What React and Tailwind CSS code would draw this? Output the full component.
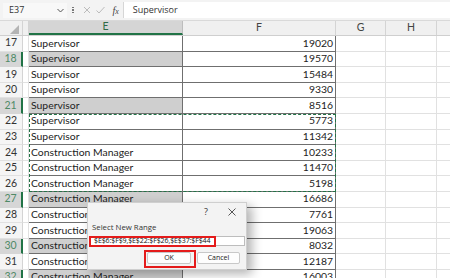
const rows = [
  [17, 'Supervisor', 19020, false],
  [18, 'Supervisor', 19570, true],
  [19, 'Supervisor', 15484, false],
  [20, 'Supervisor', 9330, false],
  [21, 'Supervisor', 8516, true],
  [22, 'Supervisor', 5773, false],
  [23, 'Supervisor', 11342, false],
  [24, 'Construction Manager', 10233, false],
  [25, 'Construction Manager', 11470, false],
  [26, 'Construction Manager', 5198, false],
  [27, 'Construction Manager', 16686, true],
  [28, 'Construction Manager', 7761, false],
  [29, 'Construction Manager', 19063, false],
  [30, 'Construction Manager', 8032, true],
  [31, 'Construction Manager', 12187, false],
  [32, 'Construction Manager', 16003, true],
];

function Row({ n, label, val, sel }) {
  return (
    <div className="flex h-[15.6px] shrink-0">
      <div
        className={
          sel
            ? 'w-[23px] shrink-0 flex items-center justify-center text-[10.5px] bg-[#d6d6d6] text-[#4f8a66] border-r-2 border-[#217346] border-b border-b-[#d6d6d6]'
            : 'w-[23px] shrink-0 flex items-center justify-center text-[10.5px] bg-[#f5f5f5] text-[#333] border-r border-[#d4d4d4] border-b border-b-[#e1e1e1]'
        }
      >
        {n}
      </div>
      <div className="w-[6px] shrink-0 border-r border-b border-[#e1e1e1]" />
      <div
        className={
          'w-[154px] shrink-0 flex items-center pl-[2px] text-[10.4px] border-r border-b border-[#6f6f6f] ' +
          (sel ? 'bg-[#cfcfcf]' : 'bg-white')
        }
      >
        {label}
      </div>
      <div className="w-[153px] shrink-0 flex items-center justify-end pr-[2px] text-[10.4px] border-r border-b border-[#6f6f6f]">
        {val}
      </div>
      <div className="w-[50px] shrink-0 border-r border-b border-[#e1e1e1]" />
      <div className="w-[51px] shrink-0 border-r border-b border-[#e1e1e1]" />
      <div className="flex-1 border-b border-[#e1e1e1]" />
    </div>
  );
}

export default function App() {
  return (
    <div className="w-[450px] h-[278px] overflow-hidden bg-white relative font-['Lato',sans-serif] text-[#222]">
      {/* formula bar */}
      <div className="h-[21px] bg-[#f3f3f3] flex items-center border-b border-[#d9d9d9]">
        <div className="ml-[3px] w-[64px] h-[15px] bg-[#f8f8f8] flex items-center justify-between pl-[6px] pr-[3px] text-[9px] font-['Open_Sans',sans-serif] text-[#333]">
          <span>E37</span>
          <svg width="7" height="5" viewBox="0 0 7 5">
            <path d="M0.5 1l3 3 3-3" fill="none" stroke="#555" strokeWidth="1" />
          </svg>
        </div>
        <div className="ml-[5px] flex flex-col gap-[1px]">
          <div className="w-[1.5px] h-[1.5px] bg-[#777]" />
          <div className="w-[1.5px] h-[1.5px] bg-[#777]" />
          <div className="w-[1.5px] h-[1.5px] bg-[#777]" />
        </div>
        <svg className="ml-[9px]" width="8" height="8" viewBox="0 0 8 8">
          <path d="M1 1l6 6M7 1l-6 6" stroke="#bbb" strokeWidth="1" />
        </svg>
        <svg className="ml-[5px]" width="9" height="8" viewBox="0 0 9 8">
          <path d="M0.5 4.5l2.5 2.5 5.5-6" fill="none" stroke="#bbb" strokeWidth="1" />
        </svg>
        <span className="ml-[8px] text-[10px] italic font-['Liberation_Serif',serif] text-[#444]">
          f<span className="text-[8px]">x</span>
        </span>
        <div className="ml-[4px] flex-1 h-[16px] bg-white border-l border-[#d6d6d6] flex items-center pl-[9px] text-[9px] font-['Open_Sans',sans-serif] text-[#333]">
          Supervisor
        </div>
      </div>

      {/* column header */}
      <div className="flex h-[15px] bg-[#f0f0f0] border-b border-[#cfcfcf] text-[10.5px] text-[#444]">
        <div className="w-[23px] shrink-0 relative border-r border-[#d4d4d4]">
          <svg className="absolute left-[10px] top-[4px]" width="9" height="9" viewBox="0 0 9 9">
            <path d="M9 0L9 9L0 9Z" fill="#b4b4b4" />
          </svg>
        </div>
        <div className="w-[6px] shrink-0 border-r border-[#d4d4d4]" />
        <div className="w-[154px] shrink-0 flex items-center justify-center bg-[#d5d5d5] text-[#2f6b47] border-b-2 border-[#217346] border-r border-r-[#bdbdbd]">
          E
        </div>
        <div className="w-[153px] shrink-0 flex items-center justify-center border-r border-[#d4d4d4]">F</div>
        <div className="w-[50px] shrink-0 flex items-center justify-center border-r border-[#d4d4d4]">G</div>
        <div className="w-[51px] shrink-0 flex items-center justify-center border-r border-[#d4d4d4]">H</div>
        <div className="flex-1" />
      </div>

      {/* rows */}
      <div className="relative flex flex-col">
        {rows.map((r) => (
          <Row key={r[0]} n={r[0]} label={r[1]} val={r[2]} sel={r[3]} />
        ))}
        {/* marching ants */}
        <div className="absolute left-[29px] top-[77.5px] w-[307px] h-[78.5px] border border-dashed border-[#217346]" />
      </div>

      {/* dialog */}
      <div className="absolute left-[87px] top-[202px] w-[160px] h-[68px] bg-[#f3f3f3] border border-[#cfcfcf] shadow-[5px_4px_10px_rgba(0,0,0,0.3)] font-['Open_Sans',sans-serif] text-[#222]">
        <div className="h-[17px] flex items-center justify-end pr-[10px] gap-[20px] text-[9px] text-[#333]">
          <span>?</span>
          <svg width="8" height="8" viewBox="0 0 8 8">
            <path d="M0.5 0.5l7 7M7.5 0.5l-7 7" stroke="#444" strokeWidth="0.9" />
          </svg>
        </div>
        <div className="pl-[4px] text-[7.8px] leading-[9px] mt-[3px] text-[#333]">Select New Range</div>
        <div className="relative mt-[4px] mx-[1px] h-[10px] bg-white border border-[#bdbdbd] flex items-center pl-[4px] text-[7px] tracking-[-0.1px] text-[#111]">
          $E$6:$F$9,$E$22:$F$26,$E$37:$F$44
          <div className="absolute -left-[1px] -top-[1px] w-[127px] h-[11px] border-2 border-[#e41b1b]" />
        </div>
        <div className="flex justify-end gap-[6px] pr-[6px] mt-[6px]">
          <div className="relative w-[44px] h-[12px] bg-[#fdfdfd] border border-[#c8c8c8] rounded-[2px] flex items-center justify-center text-[7px]">
            OK
            <div className="absolute -left-[4px] -top-[3px] w-[52px] h-[18px] border-2 border-[#e41b1b]" />
          </div>
          <div className="w-[43px] h-[12px] bg-[#fdfdfd] border border-[#c8c8c8] rounded-[2px] flex items-center justify-center text-[7px]">
            Cancel
          </div>
        </div>
      </div>
    </div>
  );
}
